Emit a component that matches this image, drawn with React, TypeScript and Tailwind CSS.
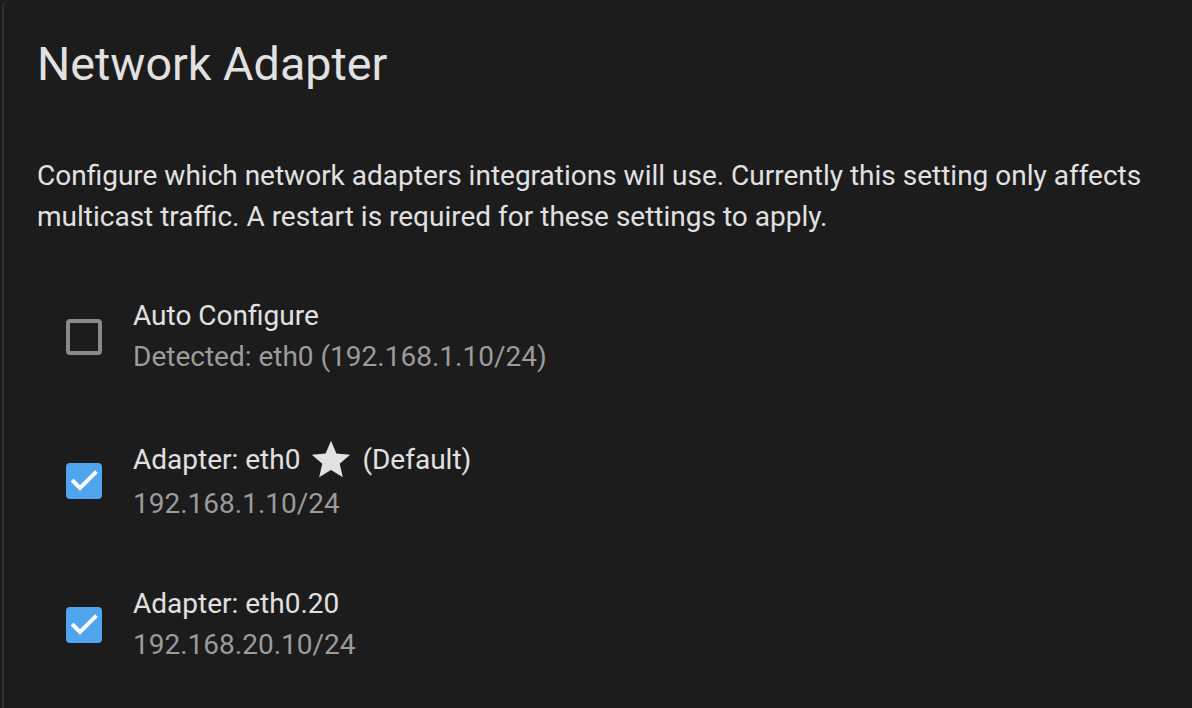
import { Fragment } from "react";

type Adapter = {
  label: string;
  detail: string;
  checked: boolean;
  isDefault?: boolean;
};

const adapters: Adapter[] = [
  { label: "Auto Configure", detail: "Detected: eth0 (192.168.1.10/24)", checked: false },
  { label: "Adapter: eth0", detail: "192.168.1.10/24", checked: true, isDefault: true },
  { label: "Adapter: eth0.20", detail: "192.168.20.10/24", checked: true },
];

function Checkbox({ checked }: { checked: boolean }) {
  if (checked) {
    return (
      <div className="h-[36px] w-[36px] shrink-0 rounded-[4px] bg-[#4fa6ee]">
        <svg viewBox="0 0 36 36" className="h-[36px] w-[36px]" fill="none" stroke="#ffffff" strokeWidth={4}>
          <path d="M7.5 18.5l6.5 6.5 15-15" strokeLinecap="square" />
        </svg>
      </div>
    );
  }
  return <div className="h-[36px] w-[36px] shrink-0 rounded-[4px] border-[4px] border-[#8a8a8a]" />;
}

function StarIcon() {
  return (
    <svg viewBox="0 0 24 24" className="h-[46px] w-[46px]" fill="#e1e1e1">
      <path d="M12,17.27L18.18,21L16.54,13.97L22,9.24L14.81,8.62L12,2L9.19,8.62L2,9.24L7.45,13.97L5.82,21L12,17.27Z" />
    </svg>
  );
}

export default function App() {
  return (
    <div className="min-h-[708px] w-[1192px] bg-[#1c1c1c] pl-[2px] font-['Roboto',sans-serif]">
      <div className="min-h-[708px] rounded-tl-[8px] border-l-2 border-[#2f2f2f] pl-[33px] pr-[20px] pt-[32px]">
        <h1 className="text-[46.7px] leading-[64px] font-normal text-[#e1e1e1]">Network Adapter</h1>

        <p className="mt-[59px] text-[28px] leading-[41px] text-[#e1e1e1]">
          Configure which network adapters integrations will use. Currently this setting only affects
          <br />
          multicast traffic. A restart is required for these settings to apply.
        </p>

        <div className="mt-[59px] flex flex-col gap-[60px] pl-[29px]">
          {adapters.map((a) => (
            <div key={a.label} className="flex items-center gap-[31px]">
              <Checkbox checked={a.checked} />
              <div className="flex flex-col">
                <div className="flex items-center gap-[8px] text-[28px] leading-[40px] text-[#e1e1e1]">
                  <span>{a.label}</span>
                  {a.isDefault && (
                    <Fragment>
                      <StarIcon />
                      <span>(Default)</span>
                    </Fragment>
                  )}
                </div>
                <div className="text-[28px] leading-[41px] text-[#9b9b9b]">{a.detail}</div>
              </div>
            </div>
          ))}
        </div>
      </div>
    </div>
  );
}
